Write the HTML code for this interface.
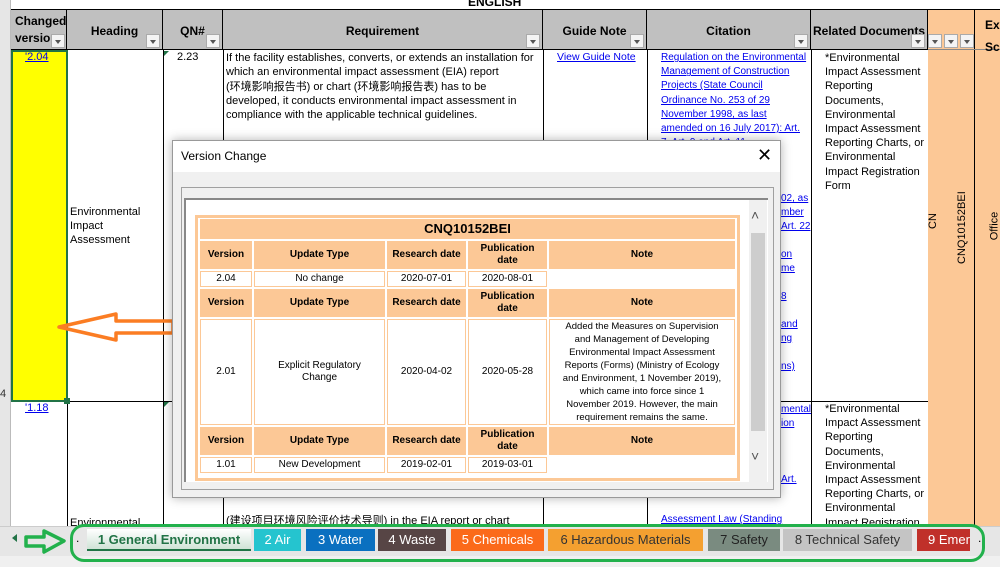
<!DOCTYPE html>
<html><head><meta charset="utf-8"><style>
*{margin:0;padding:0;box-sizing:border-box}
body{width:1000px;height:567px;overflow:hidden;background:#fff;font-family:"Liberation Sans","Noto Sans CJK SC",sans-serif;font-size:11px;position:relative;color:#000}
.a{position:absolute}
.h{background:#c0c0c0;font-weight:bold;font-size:12px;text-align:center;border-right:1px solid #000;border-bottom:1px solid #000}
.dd{position:absolute;width:14px;height:14px;background:#f4f4f4;border:1px solid #aaa;bottom:2px;right:2px}
.dd:after{content:"";position:absolute;left:3px;top:5px;border-left:3.5px solid transparent;border-right:3.5px solid transparent;border-top:4px solid #555}
.vl{position:absolute;width:1px;background:#000}
.lk{color:#00e;text-decoration:underline}
.t{line-height:14px}
table{border-collapse:separate;border-spacing:2px;background:#fff;table-layout:fixed}
td{text-align:center;font-size:10px;border:1px solid #fcc896;padding:0;overflow:hidden;line-height:12px}
td.hd{background:#fcc896;font-weight:bold;border:none}
.tab{position:absolute;top:529px;height:22px;font-size:13px;line-height:22px;text-align:center;color:#fff}
</style></head><body>
<div class="a" style="left:0;top:0;width:1000px;height:10px;background:#fff;border-bottom:1px solid #000"></div>
<div class="a" style="left:468px;top:-5px;font-weight:bold;font-size:12px">ENGLISH</div>
<div class="a" style="left:0;top:0;width:11px;height:567px;background:#e6e6e6;border-right:1px solid #bbb"></div>
<div class="a" style="left:0;top:388px;font-size:11px;color:#333">4</div>
<div class="a h" style="left:11px;top:10px;width:56px;height:40px;line-height:17px;padding-top:3px;text-align:left;padding-left:4px">Changed<br>versio</div><div class="dd" style="left:51px;top:34px"></div>
<div class="a h" style="left:67px;top:10px;width:96px;height:40px;line-height:42px">Heading</div><div class="dd" style="left:146px;top:34px"></div>
<div class="a h" style="left:163px;top:10px;width:60px;height:40px;line-height:42px">QN#</div><div class="dd" style="left:206px;top:34px"></div>
<div class="a h" style="left:223px;top:10px;width:320px;height:40px;line-height:42px">Requirement</div><div class="dd" style="left:526px;top:34px"></div>
<div class="a h" style="left:543px;top:10px;width:104px;height:40px;line-height:42px">Guide Note</div><div class="dd" style="left:630px;top:34px"></div>
<div class="a h" style="left:647px;top:10px;width:164px;height:40px;line-height:42px">Citation</div><div class="dd" style="left:794px;top:34px"></div>
<div class="a h" style="left:811px;top:10px;width:117px;height:40px;line-height:42px">Related Documents</div><div class="dd" style="left:911px;top:34px"></div>
<div class="a" style="left:928px;top:10px;width:47px;height:390px;background:#fcc896;border-right:1px solid #000"></div>
<div class="a" style="left:975px;top:10px;width:25px;height:520px;background:#fcc896"></div>
<div class="a" style="left:928px;top:400px;width:47px;height:130px;background:#fcc896;border-right:1px solid #000"></div>
<div class="a" style="left:928px;top:49px;width:72px;height:1px;background:#888"></div>
<div class="dd" style="left:928px;top:34px"></div><div class="dd" style="left:944px;top:34px"></div><div class="dd" style="left:960px;top:34px"></div>
<div class="a" style="left:985px;top:14px;font-weight:bold;font-size:12px;line-height:22px">Ex<br>Sco</div>
<div class="a" style="left:925px;top:215px;transform:rotate(-90deg);font-size:11px">CN</div>
<div class="a" style="left:922px;top:218px;width:80px;transform:rotate(-90deg);font-size:11px">CNQ10152BEI</div>
<div class="a" style="left:980px;top:220px;transform:rotate(-90deg);font-size:11px">Office</div>
<div class="vl" style="left:67px;top:50px;height:476px"></div>
<div class="vl" style="left:163px;top:50px;height:476px"></div>
<div class="vl" style="left:223px;top:50px;height:476px"></div>
<div class="vl" style="left:543px;top:50px;height:476px"></div>
<div class="vl" style="left:647px;top:50px;height:476px"></div>
<div class="vl" style="left:811px;top:50px;height:476px"></div>
<div class="a" style="left:11px;top:401px;width:917px;height:1px;background:#000"></div>
<div class="a" style="left:11px;top:50px;width:57px;height:352px;background:#ff0;border:2px solid #217346"></div>
<div class="a" style="left:64px;top:398px;width:6px;height:6px;background:#217346"></div>
<div class="a lk" style="left:25px;top:51px">'2.04</div>
<div class="a lk" style="left:25px;top:402px">'1.18</div>
<div class="a t" style="left:70px;top:205px">Environmental<br>Impact<br>Assessment</div>
<div class="a t" style="left:70px;top:516px">Environmental</div>
<div class="a" style="left:164px;top:51px;border-top:5px solid #217346;border-right:5px solid transparent"></div>
<div class="a" style="left:164px;top:402px;border-top:5px solid #217346;border-right:5px solid transparent"></div>
<div class="a" style="left:177px;top:51px">2.23</div>
<div class="a t" style="left:226px;top:51px;width:318px;line-height:14.3px;white-space:nowrap">If the facility establishes, converts, or extends an installation for<br>which an environmental impact assessment (EIA) report<br>(环境影响报告书) or chart (环境影响报告表) has to be<br>developed, it conducts environmental impact assessment in<br>compliance with the applicable technical guidelines.</div>
<div class="a t" style="left:226px;top:514px">(建设项目环境风险评价技术导则) in the EIA report or chart</div>
<div class="a lk" style="left:557px;top:51px;font-size:10.5px">View Guide Note</div>
<div class="a lk t" style="left:661px;top:51px;line-height:14.2px;font-size:10px;white-space:nowrap">Regulation on the Environmental<br>Management of Construction<br>Projects (State Council<br>Ordinance No. 253 of 29<br>November 1998, as last<br>amended on 16 July 2017): Art.<br>7, Art. 9 and Art. 11</div>
<div class="a lk t" style="left:781px;top:192px;line-height:14px;font-size:10px">02, as<br>mber<br>Art. 22<br><br>on<br>me<br><br>8<br><br>and<br>ng<br><br>ns)</div>
<div class="a lk t" style="left:781px;top:403px;font-size:10px">mental<br>ion<br><br><br><br>Art.</div>
<div class="a lk" style="left:661px;top:514px;font-size:10px">Assessment Law (Standing</div>
<div class="a t" style="left:825px;top:51px;line-height:14.2px">*Environmental<br>Impact Assessment<br>Reporting<br>Documents,<br>Environmental<br>Impact Assessment<br>Reporting Charts, or<br>Environmental<br>Impact Registration<br>Form</div>
<div class="a t" style="left:825px;top:402px;line-height:14.2px">*Environmental<br>Impact Assessment<br>Reporting<br>Documents,<br>Environmental<br>Impact Assessment<br>Reporting Charts, or<br>Environmental<br>Impact Registration</div>
<svg class="a" style="left:55px;top:310px" width="125" height="35"><path d="M4 17 L61 4 L61 11 L118 11 L118 23 L61 23 L61 30 Z" fill="none" stroke="#fb7d23" stroke-width="3.5" stroke-linejoin="round"/></svg>
<div class="a" style="left:172px;top:140px;width:609px;height:358px;background:#f0f0f0;border:1px solid #999;box-shadow:0 0 10px rgba(0,0,0,.3)">
 <div class="a" style="left:0;top:0;width:607px;height:31px;background:#fff"></div>
 <div class="a" style="left:8px;top:8px;font-size:12px">Version Change</div>
 <div class="a" style="left:584px;top:4px;font-size:18px;font-weight:300">✕</div>
 <div class="a" style="left:8px;top:46px;width:593px;height:303px;border:1px solid #a0a0a0;background:#f0f0f0"></div>
 <div class="a" style="left:11px;top:57px;width:584px;height:284px;background:#fff;border-top:2px solid #888;border-left:2px solid #888"></div>
 <div class="a" style="left:576px;top:59px;width:18px;height:282px;background:#f0f0f0"></div>
 <div class="a" style="left:578px;top:92px;width:14px;height:198px;background:#cdcdcd"></div>
 <div class="a" style="left:578px;top:66px;font-size:14px;color:#555">&#x2c4;</div>
 <div class="a" style="left:578px;top:307px;font-size:14px;color:#555">&#x2c5;</div>
 <div class="a" style="left:22px;top:74px;width:545px;height:266px;border:3px solid #fcc896;background:#fff;overflow:hidden">
 <table style="width:539px;position:absolute;left:0;top:-1px">
  <colgroup><col style="width:52px"><col style="width:131px"><col style="width:79px"><col style="width:79px"><col></colgroup>
  <tr style="height:20px"><td class="hd" colspan="5" style="font-size:13px">CNQ10152BEI</td></tr>
  <tr style="height:28px"><td class="hd">Version</td><td class="hd">Update Type</td><td class="hd">Research date</td><td class="hd">Publication<br>date</td><td class="hd">Note</td></tr>
  <tr style="height:16px"><td>2.04</td><td>No change</td><td>2020-07-01</td><td>2020-08-01</td><td style="border:none"></td></tr>
  <tr style="height:28px"><td class="hd">Version</td><td class="hd">Update Type</td><td class="hd">Research date</td><td class="hd">Publication<br>date</td><td class="hd">Note</td></tr>
  <tr style="height:104px"><td>2.01</td><td>Explicit Regulatory<br>Change</td><td>2020-04-02</td><td>2020-05-28</td><td style="line-height:13px;font-size:9.5px;white-space:nowrap">Added the Measures on Supervision<br>and Management of Developing<br>Environmental Impact Assessment<br>Reports (Forms) (Ministry of Ecology<br>and Environment, 1 November 2019),<br>which came into force since 1<br>November 2019. However, the main<br>requirement remains the same.</td></tr>
  <tr style="height:28px"><td class="hd">Version</td><td class="hd">Update Type</td><td class="hd">Research date</td><td class="hd">Publication<br>date</td><td class="hd">Note</td></tr>
  <tr style="height:16px"><td>1.01</td><td>New Development</td><td>2019-02-01</td><td>2019-03-01</td><td style="border:none"></td></tr>
 </table></div>
</div>
<div class="a" style="left:0;top:526px;width:1000px;height:30px;background:#e6e6e6;border-top:1px solid #ccc"></div>
<div class="a" style="left:0;top:556px;width:1000px;height:11px;background:#f0f0f0"></div>
<div class="a" style="left:12px;top:534px;border-right:5px solid #217346;border-top:4px solid transparent;border-bottom:4px solid transparent"></div>
<div class="tab" style="left:87px;width:164px;background:linear-gradient(#fff,#cfe3d6);color:#217346;font-weight:bold;border-bottom:2px solid #217346">1 General Environment</div>
<div class="tab" style="left:254px;width:47px;background:#25c4cf">2 Air</div>
<div class="tab" style="left:306px;width:69px;background:#0a70c0">3 Water</div>
<div class="tab" style="left:378px;width:68px;background:#574545">4 Waste</div>
<div class="tab" style="left:451px;width:93px;background:#fb6a1a">5 Chemicals</div>
<div class="tab" style="left:548px;width:155px;background:#f4a030;color:#333">6 Hazardous Materials</div>
<div class="tab" style="left:708px;width:72px;background:#7a8b80;color:#222">7 Safety</div>
<div class="tab" style="left:783px;width:129px;background:#c4c4c4;color:#333">8 Technical Safety</div>
<div class="tab" style="left:917px;width:53px;background:#c0302a;text-align:left;padding-left:11px;overflow:hidden">9 Emer</div>
<div class="a" style="left:978px;top:531px;font-size:12px">..</div>
<div class="a" style="left:76px;top:531px;font-size:12px">.</div>
<div class="a" style="left:70px;top:524px;width:915px;height:38px;border:3px solid #22b14c;border-radius:14px"></div>
<svg class="a" style="left:22px;top:527px" width="50" height="30"><path d="M4 10 L22 10 L22 4 L42 14 L22 25 L22 19 L4 19 Z" fill="none" stroke="#22b14c" stroke-width="3.5" stroke-linejoin="round"/></svg>
</body></html>
